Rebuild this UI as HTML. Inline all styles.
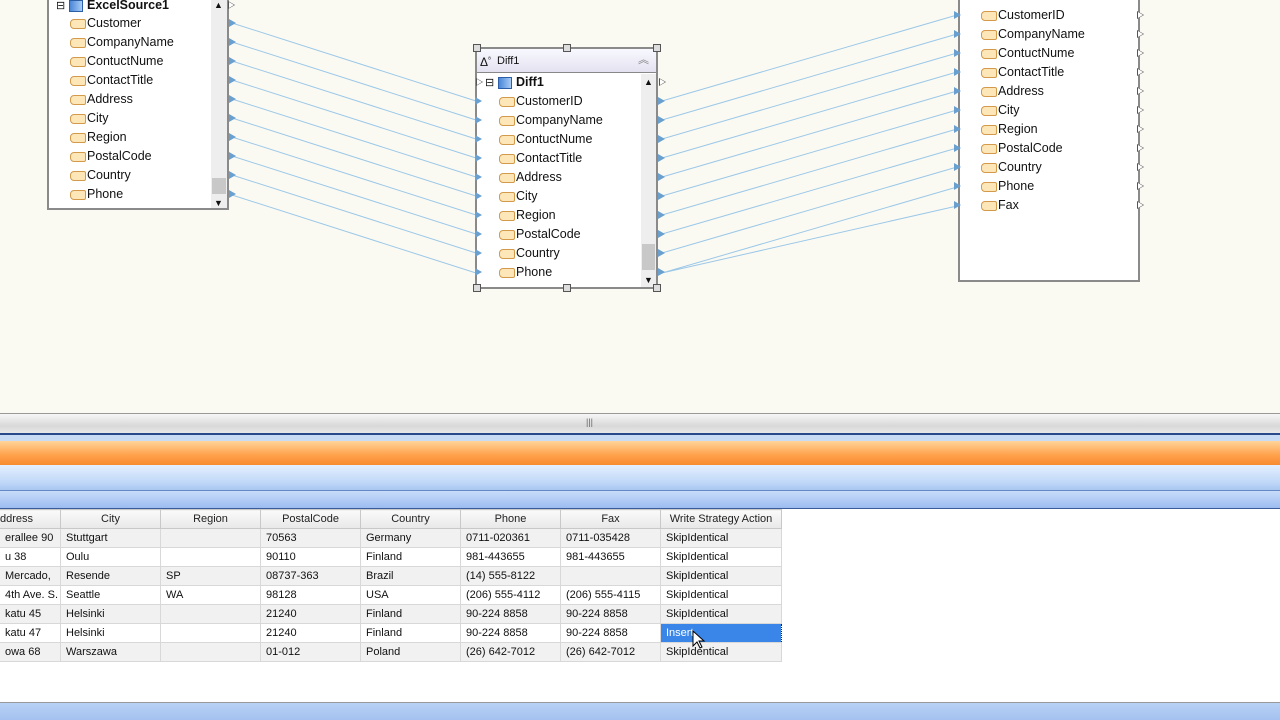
<!DOCTYPE html>
<html><head><meta charset="utf-8"><style>
body{margin:0;width:1280px;height:720px;overflow:hidden;background:#fbfaf2;font-family:"Liberation Sans",sans-serif;position:relative}
.box{position:absolute;background:#fff;border:2px solid #8a8a8a;border-top:none;box-sizing:border-box}
.it{position:absolute;font-size:12.5px;color:#111;white-space:nowrap;line-height:16px}
.tag{position:absolute;width:14px;height:8px;border:1px solid #d29a4a;border-radius:4px 2px 2px 4px;background:#fde6b8}
.sb{position:absolute;background:#eeeeee}
.port{position:absolute;width:0;height:0;border-top:4px solid transparent;border-bottom:4px solid transparent;border-left:7px solid #6aa0d0}
.porto{position:absolute;width:0;height:0;border-top:4px solid transparent;border-bottom:4px solid transparent;border-left:7px solid #555}
.porto:after{content:"";position:absolute;left:-6px;top:-3px;border-top:3px solid transparent;border-bottom:3px solid transparent;border-left:5px solid #fff}
table{border-collapse:collapse;table-layout:fixed;position:absolute;left:-1px;top:509px;font-size:11px;font-family:"Liberation Sans",sans-serif}
td,th{box-sizing:border-box;height:19px;line-height:17px;padding:0 0 0 5px;white-space:nowrap;overflow:hidden}
td{border:1px solid #d8d8d8;color:#111}
th{font-weight:normal;border:1px solid #c8c8c8;background:linear-gradient(#fafafa,#e8e8e8);color:#222;padding:0}
tr.g td{background:#f1f1f1}
.h{position:absolute;width:6px;height:6px;border:1px solid #555;background:#ddd}
</style></head><body>
<svg width="1280" height="300" style="position:absolute;left:0;top:0" fill="none" stroke="#9cc8e8" stroke-width="1">
<path d="M232 23 L476 101 M232 42 L476 120 M232 61 L476 139 M232 80 L476 158 M232 99 L476 177 M232 118 L476 196 M232 137 L476 215 M232 156 L476 234 M232 175 L476 253 M232 195 L476 273"/>
<path d="M662 101 L957 15 M662 120 L957 34 M662 139 L957 53 M662 158 L957 72 M662 177 L957 91 M662 196 L957 110 M662 215 L957 129 M662 234 L957 148 M662 253 L957 167 M662 273 L957 187 M662 273 L957 206"/>
</svg>
<div class="box" style="left:47px;top:-10px;width:182px;height:220px"></div>
<div class="sb" style="left:211px;top:0;width:16px;height:208px"></div>
<div class="sb" style="left:212px;top:178px;width:14px;height:16px;background:#c8c8c8"></div>
<div class="it" style="left:214px;top:-3px;font-size:9px">▲</div>
<div class="it" style="left:214px;top:195px;font-size:9px">▼</div>
<div class="it" style="left:56px;top:-2px;font-size:11px">⊟</div>
<div style="position:absolute;left:69px;top:0;width:12px;height:10px;background:linear-gradient(90deg,#4a86d8,#a8cdf5);border:1px solid #2c5ea8"></div>
<div class="it" style="left:87px;top:-3px;font-weight:bold">ExcelSource1</div>
<div class="porto" style="left:228px;top:1px"></div>
<div id="L"></div>
<div class="box" style="left:475px;top:47px;width:183px;height:242px;border-top:2px solid #8a8a8a"></div>
<div style="position:absolute;left:477px;top:49px;width:179px;height:23px;background:linear-gradient(#f8f8ff,#e4e2f0);border-bottom:1px solid #888"></div>
<div class="it" style="left:480px;top:52px;font-size:12px">Δ<sup style="font-size:7px">⁸</sup></div>
<div class="it" style="left:497px;top:53px;font-size:11px">Diff1</div>
<div class="it" style="left:638px;top:52px;color:#777;font-size:11px">︽</div>
<div class="sb" style="left:641px;top:74px;width:15px;height:213px"></div>
<div class="sb" style="left:642px;top:244px;width:13px;height:26px;background:#c8c8c8"></div>
<div class="it" style="left:644px;top:74px;font-size:9px">▲</div>
<div class="it" style="left:644px;top:272px;font-size:9px">▼</div>
<div class="it" style="left:485px;top:75px;font-size:11px">⊟</div>
<div style="position:absolute;left:498px;top:77px;width:12px;height:10px;background:linear-gradient(90deg,#4a86d8,#a8cdf5);border:1px solid #2c5ea8"></div>
<div class="it" style="left:516px;top:74px;font-weight:bold">Diff1</div>
<div class="porto" style="left:476px;top:78px"></div><div class="porto" style="left:659px;top:78px"></div>
<div class="h" style="left:473px;top:44px"></div><div class="h" style="left:563px;top:44px"></div><div class="h" style="left:653px;top:44px"></div>
<div class="h" style="left:473px;top:284px"></div><div class="h" style="left:563px;top:284px"></div><div class="h" style="left:653px;top:284px"></div>
<div class="box" style="left:958px;top:-10px;width:182px;height:292px"></div>
<div id="R"></div>
<div id="D"></div>
<div style="position:absolute;left:0;top:413px;width:1280px;height:20px;background:linear-gradient(#f6f6f6,#d8d8d8 60%,#ececec);border-top:1px solid #999"></div>
<div class="it" style="left:586px;top:414px;font-size:9px;color:#666">|||</div>
<div style="position:absolute;left:0;top:433px;width:1280px;height:2px;background:#2a4a8a"></div>
<div style="position:absolute;left:0;top:435px;width:1280px;height:6px;background:#c8dcf6"></div>
<div style="position:absolute;left:0;top:441px;width:1280px;height:24px;background:linear-gradient(#ffd49a,#ffa04a 60%,#f88a30)"></div>
<div style="position:absolute;left:0;top:465px;width:1280px;height:25px;background:linear-gradient(#e4efff,#c0d8f8 70%,#a8c6f0);border-bottom:1px solid #6488c4"></div>
<div style="position:absolute;left:0;top:491px;width:1280px;height:17px;background:linear-gradient(#c8dcfa,#9cbcf0);border-bottom:1px solid #3a5a9a"></div>
<div style="position:absolute;left:0;top:509px;width:1280px;height:193px;background:#fff;border-bottom:1px solid #999"></div>
<div style="position:absolute;left:0;top:703px;width:1280px;height:17px;background:linear-gradient(#b8d0f4,#a4c2f0)"></div>
<table style="width:782px">
<colgroup><col style="width:61px"><col style="width:100px"><col style="width:100px"><col style="width:100px"><col style="width:100px"><col style="width:100px"><col style="width:100px"><col style="width:121px"></colgroup>
<tr><th style="text-align:left">ddress</th><th>City</th><th>Region</th><th>PostalCode</th><th>Country</th><th>Phone</th><th>Fax</th><th>Write Strategy Action</th></tr>
<tr class="g"><td>erallee 90</td><td>Stuttgart</td><td></td><td>70563</td><td>Germany</td><td>0711-020361</td><td>0711-035428</td><td>SkipIdentical</td></tr>
<tr><td>u 38</td><td>Oulu</td><td></td><td>90110</td><td>Finland</td><td>981-443655</td><td>981-443655</td><td>SkipIdentical</td></tr>
<tr class="g"><td>Mercado,</td><td>Resende</td><td>SP</td><td>08737-363</td><td>Brazil</td><td>(14) 555-8122</td><td></td><td>SkipIdentical</td></tr>
<tr><td>4th Ave. S.</td><td>Seattle</td><td>WA</td><td>98128</td><td>USA</td><td>(206) 555-4112</td><td>(206) 555-4115</td><td>SkipIdentical</td></tr>
<tr class="g"><td>katu 45</td><td>Helsinki</td><td></td><td>21240</td><td>Finland</td><td>90-224 8858</td><td>90-224 8858</td><td>SkipIdentical</td></tr>
<tr><td>katu 47</td><td>Helsinki</td><td></td><td>21240</td><td>Finland</td><td>90-224 8858</td><td>90-224 8858</td><td style="background:#3a86e8;color:#fff;border:1px dotted #123">Insert</td></tr>
<tr class="g"><td>owa 68</td><td>Warszawa</td><td></td><td>01-012</td><td>Poland</td><td>(26) 642-7012</td><td>(26) 642-7012</td><td>SkipIdentical</td></tr>
</table>
<svg style="position:absolute;left:692px;top:630px" width="14" height="20"><path d="M1 1 L1 16 L5 12 L8 18 L10 17 L7 11 L12 11 Z" fill="#fff" stroke="#000"/></svg>
<script>
function add(id,x0,px,po,pi,names,y0){var h='';names.forEach(function(n,i){var y=y0+19*i;
h+='<div class="tag" style="left:'+x0+'px;top:'+(y-4)+'px"></div><div class="it" style="left:'+(x0+17)+'px;top:'+(y-8)+'px">'+n+'</div>';
if(pi!=null)h+='<div class="port" style="left:'+pi+'px;top:'+(y-4)+'px"></div>';
if(po!=null)h+='<div class="'+(id=='R'?'porto':'port')+'" style="left:'+po+'px;top:'+(y-4)+'px"></div>';});
document.getElementById(id).outerHTML=h;}
add('L',70,0,229,null,["Customer","CompanyName","ContuctNume","ContactTitle","Address","City","Region","PostalCode","Country","Phone"],23);
add('D',499,0,658,475,["CustomerID","CompanyName","ContuctNume","ContactTitle","Address","City","Region","PostalCode","Country","Phone"],101);
add('R',981,0,1137,954,["CustomerID","CompanyName","ContuctNume","ContactTitle","Address","City","Region","PostalCode","Country","Phone","Fax"],15);
</script>
</body></html>
